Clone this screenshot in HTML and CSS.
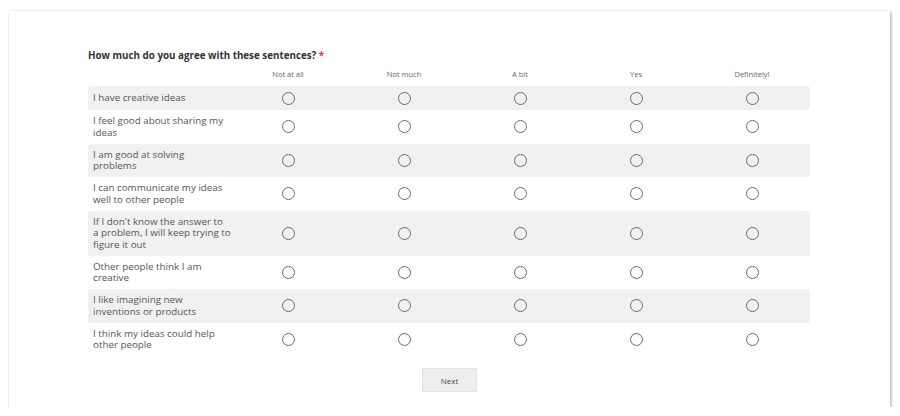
FILE: index.html
```html
<!DOCTYPE html>
<html>
<head>
<meta charset="utf-8">
<link rel="stylesheet" href="styles.css">
</head>
<body>
<div class="card">
  <div class="question">How much do you agree with these sentences? <span class="req">*</span></div>
  <div class="matrix">
    <div class="row head">
      <div></div>
      <div class="col">Not at all</div>
      <div class="col">Not much</div>
      <div class="col">A bit</div>
      <div class="col">Yes</div>
      <div class="col">Definitely!</div>
    </div>
    <div class="row alt">
      <div class="label">I have creative ideas</div>
      <div class="cell"><span class="radio"></span></div><div class="cell"><span class="radio"></span></div><div class="cell"><span class="radio"></span></div><div class="cell"><span class="radio"></span></div><div class="cell"><span class="radio"></span></div>
    </div>
    <div class="row">
      <div class="label">I feel good about sharing my<br>ideas</div>
      <div class="cell"><span class="radio"></span></div><div class="cell"><span class="radio"></span></div><div class="cell"><span class="radio"></span></div><div class="cell"><span class="radio"></span></div><div class="cell"><span class="radio"></span></div>
    </div>
    <div class="row alt">
      <div class="label">I am good at solving<br>problems</div>
      <div class="cell"><span class="radio"></span></div><div class="cell"><span class="radio"></span></div><div class="cell"><span class="radio"></span></div><div class="cell"><span class="radio"></span></div><div class="cell"><span class="radio"></span></div>
    </div>
    <div class="row">
      <div class="label">I can communicate my ideas<br>well to other people</div>
      <div class="cell"><span class="radio"></span></div><div class="cell"><span class="radio"></span></div><div class="cell"><span class="radio"></span></div><div class="cell"><span class="radio"></span></div><div class="cell"><span class="radio"></span></div>
    </div>
    <div class="row alt">
      <div class="label">If I don't know the answer to<br>a problem, I will keep trying to<br>figure it out</div>
      <div class="cell"><span class="radio"></span></div><div class="cell"><span class="radio"></span></div><div class="cell"><span class="radio"></span></div><div class="cell"><span class="radio"></span></div><div class="cell"><span class="radio"></span></div>
    </div>
    <div class="row">
      <div class="label">Other people think I am<br>creative</div>
      <div class="cell"><span class="radio"></span></div><div class="cell"><span class="radio"></span></div><div class="cell"><span class="radio"></span></div><div class="cell"><span class="radio"></span></div><div class="cell"><span class="radio"></span></div>
    </div>
    <div class="row alt">
      <div class="label">I like imagining new<br>inventions or products</div>
      <div class="cell"><span class="radio"></span></div><div class="cell"><span class="radio"></span></div><div class="cell"><span class="radio"></span></div><div class="cell"><span class="radio"></span></div><div class="cell"><span class="radio"></span></div>
    </div>
    <div class="row">
      <div class="label">I think my ideas could help<br>other people</div>
      <div class="cell"><span class="radio"></span></div><div class="cell"><span class="radio"></span></div><div class="cell"><span class="radio"></span></div><div class="cell"><span class="radio"></span></div><div class="cell"><span class="radio"></span></div>
    </div>
  </div>
  <div class="actions"><button class="next">Next</button></div>
</div>
</body>
</html>
```
FILE: styles.css
```css
html, body { margin: 0; padding: 0; background: #fff; }
body { font-family: "Open Sans", "Noto Sans", sans-serif; color: #555; }
.card {
  margin: 11px 10px 0 9px;
  height: 396px;
  box-sizing: border-box;
  background: #fff;
  box-shadow: 1px 1px 3px rgba(0,0,0,0.35), 0 0 1px rgba(0,0,0,0.06);
  padding: 39px 80px 0 79px;
}
.question {
  font-size: 9.8px;
  font-weight: 700;
  color: #333;
  line-height: 12px;
}
.req { color: #e03a3a; }
.matrix { margin-top: 7px; width: 722px; }
.row {
  display: grid;
  grid-template-columns: 142px repeat(5, 116px);
  align-items: center;
  min-height: 24px;
  border-radius: 3px;
}
.row.alt { background: #f1f1f1; }
.row.head { min-height: 11px; margin-bottom: 6px; }
.col { text-align: center; font-size: 7.5px; color: #666; line-height: 11px; }
.label {
  font-size: 9.8px;
  line-height: 11.5px;
  padding: 5.25px 0 5.25px 5px;
  width: 150px;
  white-space: nowrap;
  box-sizing: border-box;
  color: #555;
}
.cell { display: flex; justify-content: center; align-items: center; }
.radio {
  width: 11px; height: 11px;
  border: 1px solid #6a6a6a;
  border-radius: 50%;
  display: block;
}
.actions { display: flex; justify-content: center; margin-top: 12px; padding-left: 1px; }
.next {
  width: 55px; height: 24px;
  background: #eeeeee;
  border: 1px solid #e2e2e2;
  border-radius: 0;
  font-family: "Open Sans", "Noto Sans", sans-serif;
  font-size: 8px;
  color: #444;
  padding: 0;
}
```
